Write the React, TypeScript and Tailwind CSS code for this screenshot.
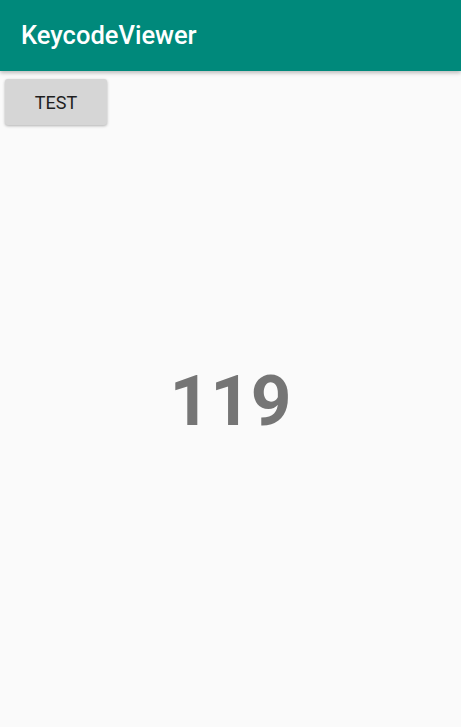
export default function App() {
  return (
    <div
      className="flex h-[727px] w-full flex-col bg-[#fafafa]"
      style={{ fontFamily: "Roboto, 'Noto Sans', sans-serif" }}
    >
      <header className="relative z-10 flex h-[71px] shrink-0 items-center bg-[#00897b] px-[21px] shadow-[0_2px_4px_rgba(0,0,0,0.25)]">
        <h1 className="text-[25.5px] font-medium leading-none text-white">KeycodeViewer</h1>
      </header>

      <div className="relative flex flex-1 flex-col">
        <div className="absolute left-[5px] top-[8px]">
          <button className="flex h-[46px] w-[102px] items-center justify-center rounded-[3px] bg-[#d6d6d6] text-[18px] font-normal text-[#1f1f1f] shadow-[0_1px_3px_rgba(0,0,0,0.3)]">
            TEST
          </button>
        </div>
        <div className="flex flex-1 items-center justify-center pt-[2px]">
          <span className="text-[71px] font-bold leading-none text-[#757575]">119</span>
        </div>
      </div>
    </div>
  );
}
